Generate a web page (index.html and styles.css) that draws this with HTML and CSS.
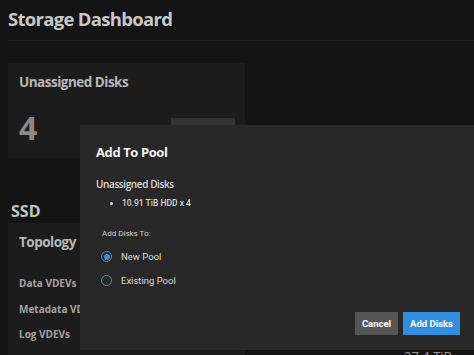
FILE: index.html
```html
<!DOCTYPE html>
<html lang="en">
<head>
    <title>Storage Dashboard</title>
    <link rel="stylesheet" href="styles.css">
</head>
<body>
    <div class="header">
        <h1 class="page-title">Storage Dashboard</h1>
    </div>

    <div class="page">
        <div class="left-col">
            <!-- Unassigned disks summary -->
            <div class="card unassigned">
                <div class="card-title">Unassigned Disks</div>
                <div class="unassigned-row">
                    <span class="big-count">4</span>
                    <button class="ghost-btn">Add To Pool</button>
                </div>
            </div>

            <div class="section-title">SSD</div>

            <div class="card topology">
                <div class="card-title">Topology</div>
                <div class="vdev-row">Data VDEVs</div>
                <div class="vdev-row">Metadata VDEVs</div>
                <div class="vdev-row">Log VDEVs</div>
            </div>
        </div>

        <div class="right-col">
            <div class="legend">
                <span class="legend-swatch"></span>
                <span class="legend-text">27.4 TiB (HDD)</span>
            </div>
        </div>
    </div>

    <!-- Add To Pool dialog -->
    <div class="dialog">
        <div class="dialog-title">Add To Pool</div>
        <div class="dialog-subtitle">Unassigned Disks</div>
        <ul class="disk-list">
            <li>10.91 TiB HDD x 4</li>
        </ul>
        <div class="field-label">Add Disks To:</div>
        <label class="radio-row">
            <span class="radio checked"></span>
            <span>New Pool</span>
        </label>
        <label class="radio-row">
            <span class="radio"></span>
            <span>Existing Pool</span>
        </label>
        <div class="dialog-actions">
            <button class="btn btn-cancel">Cancel</button>
            <button class="btn btn-primary">Add Disks</button>
        </div>
    </div>
</body>
</html>
```

FILE: styles.css
```css
body {
    margin: 0;
    padding: 0;
    background: #141414;
    font-family: 'Open Sans', sans-serif;
    color: #bdbdbd;
    overflow: hidden;
}
.header {
    margin-left: 8px;
    height: 40px;
    border-bottom: 1px solid #222;
}
.page-title {
    margin: 0;
    padding-top: 6px;
    font-size: 18.5px;
    font-weight: 700;
    letter-spacing: -0.7px;
    color: #c8c8c8;
}
.page {
    display: flex;
    padding: 0 8px;
}
.left-col {
    width: 237px;
}
.card {
    background: #1c1c1c;
}
.unassigned {
    margin-top: 22px;
    height: 95px;
}
.card-title {
    padding: 10px 11px 0;
    font-size: 13.5px;
    font-weight: 700;
    letter-spacing: -0.5px;
    color: #b8b8b8;
}
.unassigned-row {
    display: flex;
    justify-content: space-between;
    align-items: flex-start;
    padding: 17px 10px 0 11px;
}
.big-count {
    font-size: 32px;
    font-weight: 700;
    line-height: 40px;
    color: #8a8a8a;
}
.ghost-btn {
    margin-top: 10px;
    width: 64px;
    height: 24px;
    border: none;
    background: #333;
    color: #999;
    font-size: 9px;
}
.section-title {
    margin: 42px 0 0 3px;
    font-size: 16px;
    font-weight: 700;
    color: #c4c4c4;
    line-height: 23px;
}
.topology {
    height: 200px;
}
.topology .card-title {
    padding-top: 10px;
    margin-bottom: 20px;
}
.vdev-row {
    padding-left: 11px;
    font-size: 10px;
    font-weight: 700;
    color: #a4a4a4;
    height: 25.5px;
    line-height: 25.5px;
}
.right-col {
    flex: 1;
    padding-top: 306px;
    padding-left: 142px;
}
.legend {
    display: flex;
    align-items: center;
    gap: 10px;
}
.legend-swatch {
    width: 10px;
    height: 10px;
    background: #1f5c92;
}
.legend-text {
    font-size: 13px;
    color: #9a9a9a;
}

/* dialog */
.dialog {
    position: absolute;
    left: 80px;
    top: 125px;
    width: 394px;
    height: 225px;
    box-sizing: border-box;
    padding: 18px 16px 0;
    background: #282828;
    font-family: 'Roboto', sans-serif;
    color: #e6e6e6;
}
.dialog-title {
    font-family: 'Open Sans', sans-serif;
    font-size: 13px;
    font-weight: 700;
    letter-spacing: -0.4px;
    color: #f2f2f2;
}
.dialog-subtitle {
    margin-top: 16px;
    font-family: 'Open Sans', sans-serif;
    font-size: 10px;
    font-weight: 600;
    letter-spacing: -0.4px;
    color: #dcdcdc;
}
.disk-list {
    margin: 7px 0 0;
    padding-left: 26px;
    font-size: 8.5px;
    font-weight: 500;
    color: #d8d8d8;
}
.field-label {
    margin-top: 21px;
    padding-left: 6px;
    font-size: 8px;
    color: #d0d0d0;
}
.radio-row {
    display: flex;
    align-items: center;
    gap: 9px;
    margin-top: 11px;
    padding-left: 5px;
    font-size: 9.5px;
    color: #dcdcdc;
    height: 15px;
}
.radio-row + .radio-row {
    margin-top: 9px;
}
.radio {
    width: 9px;
    height: 9px;
    border: 1.5px solid #3d8fd6;
    border-radius: 50%;
    position: relative;
}
.radio.checked::after {
    content: "";
    position: absolute;
    left: 1.5px;
    top: 1.5px;
    width: 6px;
    height: 6px;
    border-radius: 50%;
    background: #3d8fd6;
}
.dialog-actions {
    display: flex;
    justify-content: flex-end;
    gap: 5px;
    margin-top: 24px;
    margin-right: -2px;
}
.btn {
    height: 23px;
    border: none;
    font-family: 'Roboto', sans-serif;
    font-size: 9.5px;
    font-weight: 700;
    color: #fff;
    cursor: pointer;
}
.btn-cancel {
    width: 43px;
    background: #565656;
}
.btn-primary {
    width: 57px;
    background: #2f8ee0;
}
```
